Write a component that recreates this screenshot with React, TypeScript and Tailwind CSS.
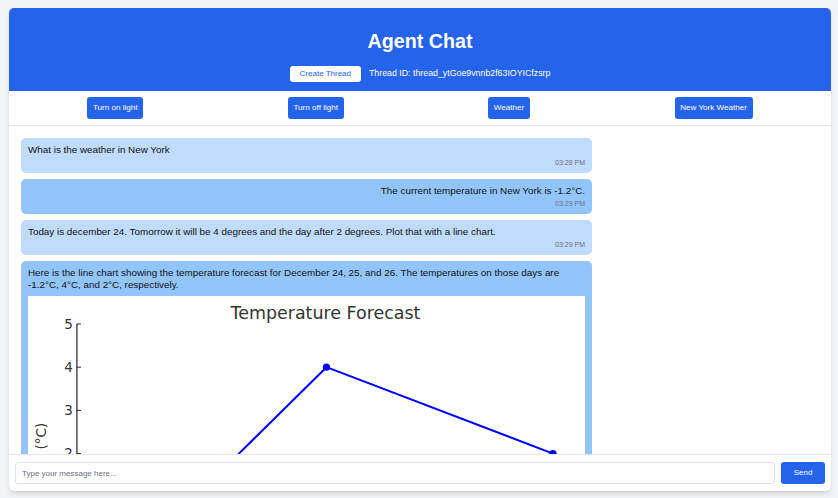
import React from "react";

const quickActions = ["Turn on light", "Turn off light", "Weather", "New York Weather"];

type Message = {
  lines: string[];
  time: string;
  from: "user" | "agent";
  chart?: boolean;
};

const messages: Message[] = [
  { lines: ["What is the weather in New York"], time: "03:28 PM", from: "user" },
  { lines: ["The current temperature in New York is -1.2°C."], time: "03:29 PM", from: "agent" },
  {
    lines: ["Today is december 24. Tomorrow it will be 4 degrees and the day after 2 degrees. Plot that with a line chart."],
    time: "03:29 PM",
    from: "user",
  },
  {
    lines: [
      "Here is the line chart showing the temperature forecast for December 24, 25, and 26. The temperatures on those days are",
      "-1.2°C, 4°C, and 2°C, respectively.",
    ],
    time: "03:29 PM",
    from: "agent",
    chart: true,
  },
];

// matplotlib-style line chart, drawn as svg
const ForecastChart = () => {
  const yFor = (v: number) => 28 + (5 - v) * 43.3;
  const points = [
    [71, yFor(-1.2)],
    [299, yFor(4)],
    [526, yFor(2)],
  ];
  const ticks = [5, 4, 3, 2, 1, 0, -1];

  return (
    <svg viewBox="0 0 558 446" className="block w-full" fontFamily="'DejaVu Sans', sans-serif">
      <text x={298} y={23} textAnchor="middle" fontSize={17.5} fill="#333">
        Temperature Forecast
      </text>
      <line x1={49} y1={28} x2={49} y2={400} stroke="#222" strokeWidth={1.2} />
      {ticks.map((t) => (
        <g key={t}>
          <line x1={49} y1={yFor(t)} x2={53} y2={yFor(t)} stroke="#222" strokeWidth={1} />
          <text x={45} y={yFor(t) + 4.7} textAnchor="end" fontSize={13.5} fill="#333">
            {t}
          </text>
        </g>
      ))}
      <text transform="translate(18,127) rotate(-90)" textAnchor="end" fontSize={13.5} fill="#333">
        Temperature (°C)
      </text>
      <polyline
        points={points.map((p) => p.join(",")).join(" ")}
        fill="none"
        stroke="#0000ff"
        strokeWidth={2}
      />
      {points.map(([x, y]) => (
        <circle key={x} cx={x} cy={y} r={3.6} fill="#0000ff" />
      ))}
    </svg>
  );
};

export default function App() {
  return (
    <div className="h-screen bg-[#f3f4f6] pt-2 pb-[7px] pl-[9px] pr-[7px] font-['Liberation_Sans',Arial,sans-serif]">
      <div className="flex h-full flex-col overflow-hidden rounded-[5px] bg-white shadow-md">
        {/* Header */}
        <div className="flex flex-col items-center bg-[#2563eb] pt-[22px] pb-[9px] text-white">
          <h1 className="text-[19.7px] font-bold leading-[23px]">Agent Chat</h1>
          <div className="mt-[13px] flex items-center gap-2">
            <button className="h-4 rounded-[3px] bg-white px-[10px] text-[8px] text-[#2563eb]">
              Create Thread
            </button>
            <span className="text-[8.8px]">Thread ID: thread_ytGoe9vnnb2f63IOYICfzsrp</span>
          </div>
        </div>

        {/* Quick actions */}
        <div className="flex justify-around border-b border-[#e5e7eb] px-1.5 py-1.5">
          {quickActions.map((label) => (
            <button
              key={label}
              className="h-[22px] rounded-[3px] bg-[#2563eb] px-[5.5px] text-[8.1px] text-white"
            >
              {label}
            </button>
          ))}
        </div>

        {/* Messages */}
        <div className="flex min-h-0 flex-1 flex-col gap-[6px] overflow-hidden px-3 pt-3">
          {messages.map((m, i) => (
            <div
              key={i}
              className={`w-[571px] shrink-0 rounded-[5px] px-[7px] py-[6px] text-[9.85px] leading-[12px] text-[#111] ${
                m.from === "user" ? "bg-[#bfdbfe] text-left" : "bg-[#93c5fd] text-right"
              }`}
            >
              {m.chart ? (
                <div className="text-left">
                  {m.lines.map((l) => (
                    <p key={l}>{l}</p>
                  ))}
                  <div className="mt-[5px] bg-white">
                    <ForecastChart />
                  </div>
                </div>
              ) : (
                m.lines.map((l) => <p key={l}>{l}</p>)
              )}
              <div className="mt-[2px] text-right text-[7px] leading-[9px] text-[#6b7280]">{m.time}</div>
            </div>
          ))}
        </div>

        {/* Input */}
        <div className="flex gap-1.5 border-t border-[#e5e7eb] px-1.5 py-[7px]">
          <input
            className="h-[22px] flex-1 rounded-[3px] border border-[#dbe3ee] px-[6px] text-[8px] outline-none placeholder:text-[#6b7280]"
            placeholder="Type your message here..."
          />
          <button className="h-[22px] w-[44px] rounded-[3px] bg-[#2563eb] text-[8px] text-white">Send</button>
        </div>
      </div>
    </div>
  );
}
